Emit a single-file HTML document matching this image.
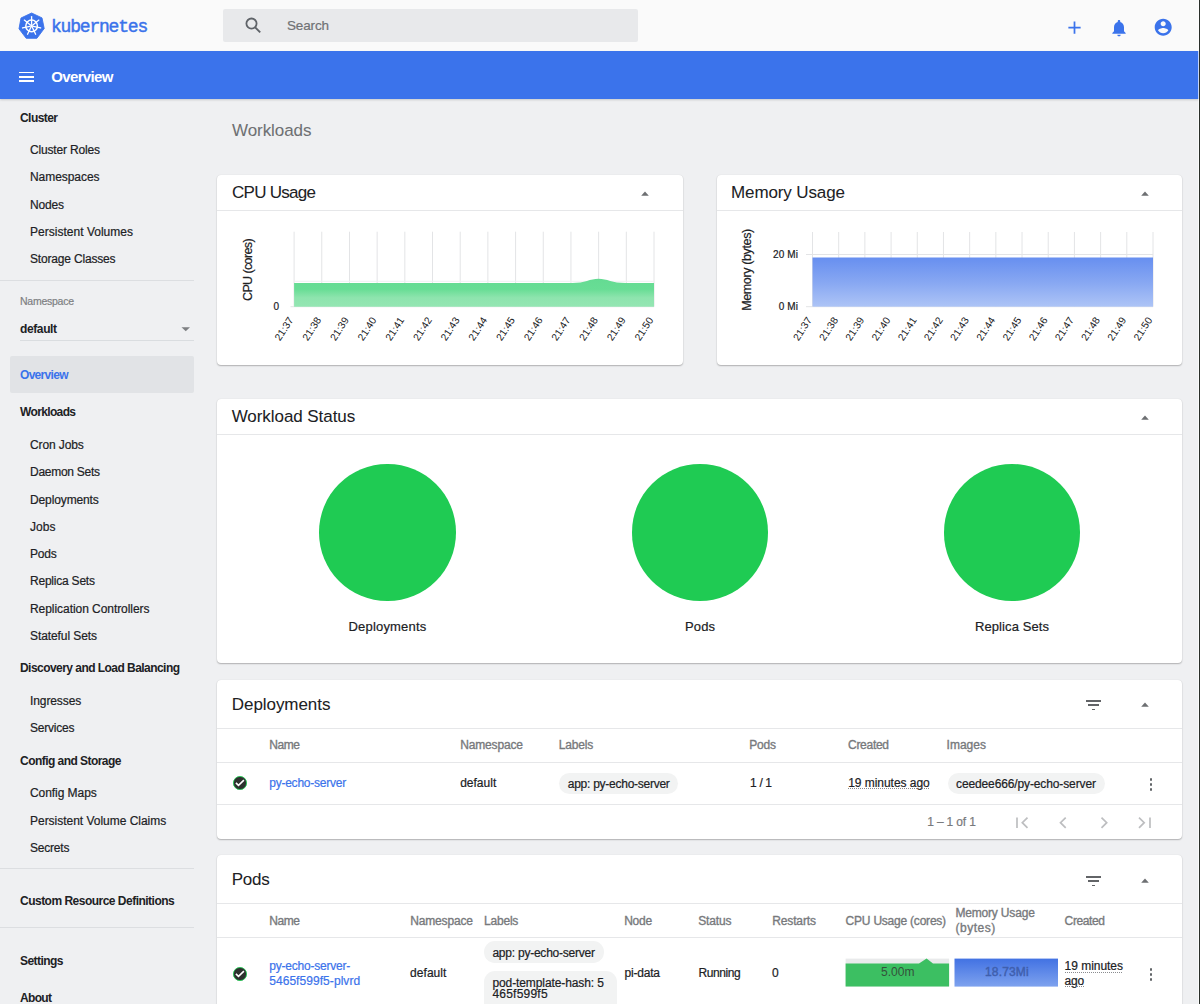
<!DOCTYPE html><html><head><meta charset="utf-8"><style>
html,body{margin:0;padding:0;width:1200px;height:1004px;overflow:hidden;background:#eff0f2;}
body{position:relative;font-family:"Liberation Sans",sans-serif;}
.t{position:absolute;white-space:nowrap;line-height:1;z-index:4;-webkit-text-stroke:0.2px currentColor;}
div,svg{position:absolute;}
svg{z-index:4;}
</style></head><body>
<div style="position:absolute;left:0px;top:0px;width:1200px;height:51px;background:#fafafa;"></div>
<svg style="position:absolute;left:0;top:0" width="60" height="51" viewBox="0 0 60 51">
<path d="M31.6 13 L42 17.9 L44.2 28.5 L36.9 38.3 L26.2 38.3 L19 28.8 L21 18 Z" fill="#3b73eb" stroke="#3b73eb" stroke-width="0.9" stroke-linejoin="round"/>
<g stroke="#fff" stroke-width="1.5" fill="none" stroke-linecap="round">
<circle cx="31.6" cy="25.9" r="5.8"/>
</g>
<g stroke="#fff" stroke-width="1.3" stroke-linecap="round">
<line x1="31.60" y1="24.30" x2="31.60" y2="16.60"/><line x1="32.85" y1="24.90" x2="38.87" y2="20.10"/><line x1="33.16" y1="26.26" x2="40.67" y2="27.97"/><line x1="32.29" y1="27.34" x2="35.64" y2="34.28"/><line x1="30.91" y1="27.34" x2="27.56" y2="34.28"/><line x1="30.04" y1="26.26" x2="22.53" y2="27.97"/><line x1="30.35" y1="24.90" x2="24.33" y2="20.10"/>
</g>
<circle cx="31.6" cy="25.9" r="1.4" fill="#fff"/>
</svg>
<div class="t" style="left:51px;top:17.6px;font-family:'Liberation Mono';font-weight:normal;-webkit-text-stroke:0.45px #3b73eb;font-size:18px;letter-spacing:-1.2px;color:#3b73eb">kubernetes</div>
<div style="position:absolute;left:223px;top:9px;width:415px;height:33px;background:#e8e9eb;border-radius:2px;"></div>
<svg style="position:absolute;left:240px;top:12px" width="26" height="26" viewBox="0 0 26 26">
<circle cx="11.5" cy="11.6" r="5.1" stroke="#5f6368" stroke-width="1.8" fill="none"/>
<line x1="15.2" y1="15.3" x2="20.2" y2="20.3" stroke="#5f6368" stroke-width="1.9"/>
</svg>
<div class="t" style="left:287.00px;top:19.07px;font-size:13.5px;color:#707275;letter-spacing:-0.160px;">Search</div>
<svg style="position:absolute;left:1064.3px;top:16.7px" width="21" height="21" viewBox="0 0 24 24"><path fill="#3b73eb" d="M19 13h-6v6h-2v-6H5v-2h6V5h2v6h6v2z"/></svg>
<svg style="position:absolute;left:1108.8px;top:17.5px" width="20" height="20" viewBox="0 0 24 24"><path fill="#3b73eb" d="M12 22c1.1 0 2-.9 2-2h-4c0 1.1.89 2 2 2zm6-6v-5c0-3.07-1.64-5.64-4.5-6.32V4c0-.83-.67-1.5-1.5-1.5s-1.5.67-1.5 1.5v.68C7.63 5.36 6 7.92 6 11v5l-2 2v1h16v-1l-2-2z"/></svg>
<svg style="position:absolute;left:1153.3px;top:17.0px" width="20.4" height="20.4" viewBox="0 0 24 24"><path fill="#3b73eb" d="M12 2C6.48 2 2 6.48 2 12s4.48 10 10 10 10-4.48 10-10S17.52 2 12 2zm0 3c1.66 0 3 1.34 3 3s-1.34 3-3 3-3-1.34-3-3 1.34-3 3-3zm0 14.2c-2.5 0-4.71-1.28-6-3.22.03-1.99 4-3.08 6-3.08 1.99 0 5.97 1.09 6 3.08-1.29 1.94-3.5 3.22-6 3.22z"/></svg>
<div style="position:absolute;left:0px;top:51px;width:1200px;height:48.1px;background:#3b73eb;box-shadow:0 1px 2px rgba(0,0,0,.16);z-index:2;"></div>
<div style="position:absolute;left:18.7px;top:71.6px;width:15.6px;height:1.8px;background:#fff;z-index:3;"></div>
<div style="position:absolute;left:18.7px;top:75.9px;width:15.6px;height:1.8px;background:#fff;z-index:3;"></div>
<div style="position:absolute;left:18.7px;top:80.1px;width:15.6px;height:1.8px;background:#fff;z-index:3;"></div>
<div class="t" style="left:51.30px;top:68.50px;font-size:15px;color:#fff;font-weight:bold;-webkit-text-stroke:0;letter-spacing:-0.671px;z-index:3;">Overview</div>
<div style="position:absolute;left:0px;top:99px;width:1200px;height:905px;background:#eff0f2;z-index:0;"></div>
<div class="t" style="left:20.00px;top:111.94px;font-size:12px;color:#202124;font-weight:bold;-webkit-text-stroke:0;letter-spacing:-0.550px;">Cluster</div>
<div class="t" style="left:30.00px;top:144.04px;font-size:12px;color:#202124;letter-spacing:-0.167px;">Cluster Roles</div>
<div class="t" style="left:30.00px;top:171.24px;font-size:12px;color:#202124;letter-spacing:-0.056px;">Namespaces</div>
<div class="t" style="left:30.00px;top:198.54px;font-size:12px;color:#202124;letter-spacing:-0.175px;">Nodes</div>
<div class="t" style="left:30.00px;top:225.74px;font-size:12px;color:#202124;letter-spacing:0.018px;">Persistent Volumes</div>
<div class="t" style="left:30.00px;top:253.14px;font-size:12px;color:#202124;letter-spacing:-0.179px;">Storage Classes</div>
<div style="position:absolute;left:0px;top:280px;width:194px;height:1px;background:#dcdee1;"></div>
<div class="t" style="left:20.00px;top:296.11px;font-size:10.5px;color:#7d7f82;letter-spacing:-0.250px;">Namespace</div>
<div class="t" style="left:20.00px;top:323.14px;font-size:12px;color:#202124;font-weight:bold;-webkit-text-stroke:0;letter-spacing:-0.383px;">default</div>
<svg style="position:absolute;left:180px;top:325px" width="12" height="8"><path d="M1.5 2.2 L10 2.2 L5.75 6.2Z" fill="#7d7f82"/></svg>
<div style="position:absolute;left:20px;top:340.2px;width:174px;height:1px;background:#dadde0;"></div>
<div style="position:absolute;left:9.7px;top:356.3px;width:184.3px;height:37px;background:#e1e3e6;border-radius:2px;"></div>
<div class="t" style="left:20.00px;top:368.54px;font-size:12px;color:#3b73eb;font-weight:bold;-webkit-text-stroke:0;letter-spacing:-0.700px;">Overview</div>
<div class="t" style="left:20.00px;top:406.04px;font-size:12px;color:#202124;font-weight:bold;-webkit-text-stroke:0;letter-spacing:-0.638px;">Workloads</div>
<div class="t" style="left:30.00px;top:439.04px;font-size:12px;color:#202124;letter-spacing:-0.113px;">Cron Jobs</div>
<div class="t" style="left:30.00px;top:466.34px;font-size:12px;color:#202124;letter-spacing:-0.270px;">Daemon Sets</div>
<div class="t" style="left:30.00px;top:493.64px;font-size:12px;color:#202124;letter-spacing:-0.120px;">Deployments</div>
<div class="t" style="left:30.00px;top:520.94px;font-size:12px;color:#202124;letter-spacing:0.067px;">Jobs</div>
<div class="t" style="left:30.00px;top:548.24px;font-size:12px;color:#202124;letter-spacing:-0.200px;">Pods</div>
<div class="t" style="left:30.00px;top:575.24px;font-size:12px;color:#202124;letter-spacing:-0.218px;">Replica Sets</div>
<div class="t" style="left:30.00px;top:602.54px;font-size:12px;color:#202124;letter-spacing:-0.055px;">Replication Controllers</div>
<div class="t" style="left:30.00px;top:629.74px;font-size:12px;color:#202124;letter-spacing:-0.083px;">Stateful Sets</div>
<div class="t" style="left:20.00px;top:662.34px;font-size:12px;color:#202124;font-weight:bold;-webkit-text-stroke:0;letter-spacing:-0.544px;">Discovery and Load Balancing</div>
<div class="t" style="left:30.00px;top:694.94px;font-size:12px;color:#202124;letter-spacing:-0.100px;">Ingresses</div>
<div class="t" style="left:30.00px;top:722.14px;font-size:12px;color:#202124;letter-spacing:-0.214px;">Services</div>
<div class="t" style="left:20.00px;top:754.94px;font-size:12px;color:#202124;font-weight:bold;-webkit-text-stroke:0;letter-spacing:-0.541px;">Config and Storage</div>
<div class="t" style="left:30.00px;top:787.24px;font-size:12px;color:#202124;letter-spacing:-0.060px;">Config Maps</div>
<div class="t" style="left:30.00px;top:814.64px;font-size:12px;color:#202124;letter-spacing:-0.022px;">Persistent Volume Claims</div>
<div class="t" style="left:30.00px;top:841.84px;font-size:12px;color:#202124;letter-spacing:-0.200px;">Secrets</div>
<div style="position:absolute;left:0px;top:867.5px;width:194px;height:1px;background:#dcdee1;"></div>
<div class="t" style="left:20.00px;top:894.84px;font-size:12px;color:#202124;font-weight:bold;-webkit-text-stroke:0;letter-spacing:-0.512px;">Custom Resource Definitions</div>
<div style="position:absolute;left:0px;top:927px;width:194px;height:1px;background:#dcdee1;"></div>
<div class="t" style="left:20.00px;top:954.54px;font-size:12px;color:#202124;font-weight:bold;-webkit-text-stroke:0;letter-spacing:-0.543px;">Settings</div>
<div class="t" style="left:20.00px;top:991.84px;font-size:12px;color:#202124;font-weight:bold;-webkit-text-stroke:0;letter-spacing:-0.675px;">About</div>
<div class="t" style="left:232.00px;top:121.61px;font-size:17px;color:#6e7073;letter-spacing:-0.062px;-webkit-text-stroke:0.05px currentColor;">Workloads</div>
<div style="position:absolute;left:217px;top:175px;width:466px;height:190px;background:#fff;border-radius:4px;box-shadow:0 1px 1.5px rgba(0,0,0,.26),0 0 1px rgba(0,0,0,.12);"></div>
<div class="t" style="left:232.00px;top:183.51px;font-size:17px;color:#202124;letter-spacing:-0.725px;-webkit-text-stroke:0.05px currentColor;">CPU Usage</div>
<div style="position:absolute;left:217px;top:209.5px;width:466px;height:1px;background:#e6e7e9;"></div>
<svg style="position:absolute;left:640.2px;top:190.3px" width="10" height="7"><path d="M1.2 5.7 L8.8 5.7 L5 1.6Z" fill="#6d6f72"/></svg>
<div style="position:absolute;left:717px;top:175px;width:465px;height:190px;background:#fff;border-radius:4px;box-shadow:0 1px 1.5px rgba(0,0,0,.26),0 0 1px rgba(0,0,0,.12);"></div>
<div class="t" style="left:731.00px;top:183.51px;font-size:17px;color:#202124;letter-spacing:-0.118px;-webkit-text-stroke:0.05px currentColor;">Memory Usage</div>
<div style="position:absolute;left:717px;top:209.5px;width:465px;height:1px;background:#e6e7e9;"></div>
<svg style="position:absolute;left:1139.5px;top:190.3px" width="10" height="7"><path d="M1.2 5.7 L8.8 5.7 L5 1.6Z" fill="#6d6f72"/></svg>
<div style="position:absolute;left:217px;top:399px;width:965px;height:264px;background:#fff;border-radius:4px;box-shadow:0 1px 1.5px rgba(0,0,0,.26),0 0 1px rgba(0,0,0,.12);"></div>
<div class="t" style="left:231.70px;top:408.11px;font-size:17px;color:#202124;letter-spacing:-0.064px;-webkit-text-stroke:0.05px currentColor;">Workload Status</div>
<div style="position:absolute;left:217px;top:433.5px;width:965px;height:1px;background:#e6e7e9;"></div>
<svg style="position:absolute;left:1139.5px;top:414.0px" width="10" height="7"><path d="M1.2 5.7 L8.8 5.7 L5 1.6Z" fill="#6d6f72"/></svg>
<div style="position:absolute;left:319.2px;top:464.3px;width:136.4px;height:136.6px;background:#1fcb53;border-radius:50%;"></div>
<div class="t" style="left:348.55px;top:620.10px;font-size:13px;color:#202124;letter-spacing:0.180px;">Deployments</div>
<div style="position:absolute;left:631.8px;top:464.3px;width:136.4px;height:136.6px;background:#1fcb53;border-radius:50%;"></div>
<div class="t" style="left:685.00px;top:620.10px;font-size:13px;color:#202124;letter-spacing:0.133px;">Pods</div>
<div style="position:absolute;left:943.8px;top:464.3px;width:136.4px;height:136.6px;background:#1fcb53;border-radius:50%;"></div>
<div class="t" style="left:975.00px;top:620.10px;font-size:13px;color:#202124;letter-spacing:0.091px;">Replica Sets</div>
<div style="position:absolute;left:217px;top:680px;width:965px;height:159px;background:#fff;border-radius:4px;box-shadow:0 1px 1.5px rgba(0,0,0,.26),0 0 1px rgba(0,0,0,.12);"></div>
<div class="t" style="left:231.80px;top:695.61px;font-size:17px;color:#202124;letter-spacing:-0.060px;-webkit-text-stroke:0.05px currentColor;">Deployments</div>
<div style="position:absolute;left:217px;top:727.5px;width:965px;height:1px;background:#e6e7e9;"></div>
<svg style="position:absolute;left:1139.5px;top:701.0px" width="10" height="7"><path d="M1.2 5.7 L8.8 5.7 L5 1.6Z" fill="#6d6f72"/></svg>
<div style="position:absolute;left:217px;top:855px;width:965px;height:200px;background:#fff;border-radius:4px;box-shadow:0 1px 1.5px rgba(0,0,0,.26),0 0 1px rgba(0,0,0,.12);"></div>
<div class="t" style="left:231.80px;top:870.51px;font-size:17px;color:#202124;letter-spacing:-0.300px;-webkit-text-stroke:0.05px currentColor;">Pods</div>
<div style="position:absolute;left:217px;top:903px;width:965px;height:1px;background:#e6e7e9;"></div>
<svg style="position:absolute;left:1139.5px;top:876.5px" width="10" height="7"><path d="M1.2 5.7 L8.8 5.7 L5 1.6Z" fill="#6d6f72"/></svg>
<div class="t" style="left:248.2px;top:269.8px;font-size:12.5px;color:#202124;letter-spacing:-0.610px;transform:translate(-50%,-50%) rotate(-90deg);transform-origin:center;">CPU (cores)</div>
<div class="t" style="left:273.60px;top:302.04px;font-size:10px;color:#202124;">0</div>
<svg style="position:absolute;left:0;top:0;z-index:4" width="1200" height="360" viewBox="0 0 1200 360"><line x1="294.10" y1="231.7" x2="294.10" y2="306.7" stroke="#e3e4e6" stroke-width="1"/><line x1="321.78" y1="231.7" x2="321.78" y2="306.7" stroke="#e3e4e6" stroke-width="1"/><line x1="349.47" y1="231.7" x2="349.47" y2="306.7" stroke="#e3e4e6" stroke-width="1"/><line x1="377.15" y1="231.7" x2="377.15" y2="306.7" stroke="#e3e4e6" stroke-width="1"/><line x1="404.84" y1="231.7" x2="404.84" y2="306.7" stroke="#e3e4e6" stroke-width="1"/><line x1="432.52" y1="231.7" x2="432.52" y2="306.7" stroke="#e3e4e6" stroke-width="1"/><line x1="460.21" y1="231.7" x2="460.21" y2="306.7" stroke="#e3e4e6" stroke-width="1"/><line x1="487.89" y1="231.7" x2="487.89" y2="306.7" stroke="#e3e4e6" stroke-width="1"/><line x1="515.58" y1="231.7" x2="515.58" y2="306.7" stroke="#e3e4e6" stroke-width="1"/><line x1="543.26" y1="231.7" x2="543.26" y2="306.7" stroke="#e3e4e6" stroke-width="1"/><line x1="570.95" y1="231.7" x2="570.95" y2="306.7" stroke="#e3e4e6" stroke-width="1"/><line x1="598.63" y1="231.7" x2="598.63" y2="306.7" stroke="#e3e4e6" stroke-width="1"/><line x1="626.32" y1="231.7" x2="626.32" y2="306.7" stroke="#e3e4e6" stroke-width="1"/><line x1="654.00" y1="231.7" x2="654.00" y2="306.7" stroke="#e3e4e6" stroke-width="1"/><line x1="294" y1="281.3" x2="654" y2="281.3" stroke="#f1f1f2" stroke-width="1"/><line x1="290.5" y1="306.7" x2="654" y2="306.7" stroke="#e3e4e6" stroke-width="1"/><defs><linearGradient id="gcpu" x1="0" y1="0" x2="0" y2="1"><stop offset="0" stop-color="#64db92"/><stop offset="0.38" stop-color="#68dd95"/><stop offset="0.68" stop-color="#8ee4ae"/><stop offset="1" stop-color="#94e6b3"/></linearGradient><linearGradient id="gmem" x1="0" y1="0" x2="0" y2="1"><stop offset="0" stop-color="#678ff0"/><stop offset="0.5" stop-color="#87a7f2"/><stop offset="1" stop-color="#adc4f6"/></linearGradient></defs><path d="M294.1 283 L572 283 C585 283 590 278.7 598.5 278.7 C607 278.7 612 283 626 283 L654 283 L654 306.7 L294.1 306.7 Z" fill="url(#gcpu)"/><text x="293.90" y="320" font-size="10.2" fill="#202124" text-anchor="end" transform="rotate(-57 293.90 320)" font-family="Liberation Sans">21:37</text><text x="321.58" y="320" font-size="10.2" fill="#202124" text-anchor="end" transform="rotate(-57 321.58 320)" font-family="Liberation Sans">21:38</text><text x="349.27" y="320" font-size="10.2" fill="#202124" text-anchor="end" transform="rotate(-57 349.27 320)" font-family="Liberation Sans">21:39</text><text x="376.95" y="320" font-size="10.2" fill="#202124" text-anchor="end" transform="rotate(-57 376.95 320)" font-family="Liberation Sans">21:40</text><text x="404.64" y="320" font-size="10.2" fill="#202124" text-anchor="end" transform="rotate(-57 404.64 320)" font-family="Liberation Sans">21:41</text><text x="432.32" y="320" font-size="10.2" fill="#202124" text-anchor="end" transform="rotate(-57 432.32 320)" font-family="Liberation Sans">21:42</text><text x="460.01" y="320" font-size="10.2" fill="#202124" text-anchor="end" transform="rotate(-57 460.01 320)" font-family="Liberation Sans">21:43</text><text x="487.69" y="320" font-size="10.2" fill="#202124" text-anchor="end" transform="rotate(-57 487.69 320)" font-family="Liberation Sans">21:44</text><text x="515.38" y="320" font-size="10.2" fill="#202124" text-anchor="end" transform="rotate(-57 515.38 320)" font-family="Liberation Sans">21:45</text><text x="543.06" y="320" font-size="10.2" fill="#202124" text-anchor="end" transform="rotate(-57 543.06 320)" font-family="Liberation Sans">21:46</text><text x="570.75" y="320" font-size="10.2" fill="#202124" text-anchor="end" transform="rotate(-57 570.75 320)" font-family="Liberation Sans">21:47</text><text x="598.43" y="320" font-size="10.2" fill="#202124" text-anchor="end" transform="rotate(-57 598.43 320)" font-family="Liberation Sans">21:48</text><text x="626.12" y="320" font-size="10.2" fill="#202124" text-anchor="end" transform="rotate(-57 626.12 320)" font-family="Liberation Sans">21:49</text><text x="653.80" y="320" font-size="10.2" fill="#202124" text-anchor="end" transform="rotate(-57 653.80 320)" font-family="Liberation Sans">21:50</text><line x1="812.50" y1="232" x2="812.50" y2="306.7" stroke="#e3e4e6" stroke-width="1"/><line x1="838.69" y1="232" x2="838.69" y2="306.7" stroke="#e3e4e6" stroke-width="1"/><line x1="864.88" y1="232" x2="864.88" y2="306.7" stroke="#e3e4e6" stroke-width="1"/><line x1="891.08" y1="232" x2="891.08" y2="306.7" stroke="#e3e4e6" stroke-width="1"/><line x1="917.27" y1="232" x2="917.27" y2="306.7" stroke="#e3e4e6" stroke-width="1"/><line x1="943.46" y1="232" x2="943.46" y2="306.7" stroke="#e3e4e6" stroke-width="1"/><line x1="969.65" y1="232" x2="969.65" y2="306.7" stroke="#e3e4e6" stroke-width="1"/><line x1="995.85" y1="232" x2="995.85" y2="306.7" stroke="#e3e4e6" stroke-width="1"/><line x1="1022.04" y1="232" x2="1022.04" y2="306.7" stroke="#e3e4e6" stroke-width="1"/><line x1="1048.23" y1="232" x2="1048.23" y2="306.7" stroke="#e3e4e6" stroke-width="1"/><line x1="1074.42" y1="232" x2="1074.42" y2="306.7" stroke="#e3e4e6" stroke-width="1"/><line x1="1100.62" y1="232" x2="1100.62" y2="306.7" stroke="#e3e4e6" stroke-width="1"/><line x1="1126.81" y1="232" x2="1126.81" y2="306.7" stroke="#e3e4e6" stroke-width="1"/><line x1="1153.00" y1="232" x2="1153.00" y2="306.7" stroke="#e3e4e6" stroke-width="1"/><line x1="806" y1="254.5" x2="1153" y2="254.5" stroke="#e3e4e6" stroke-width="1"/><line x1="806" y1="306.7" x2="1153" y2="306.7" stroke="#e3e4e6" stroke-width="1"/><rect x="812.5" y="257.5" width="340.5" height="49.2" fill="url(#gmem)"/><text x="812.30" y="320" font-size="10.2" fill="#202124" text-anchor="end" transform="rotate(-57 812.30 320)" font-family="Liberation Sans">21:37</text><text x="838.49" y="320" font-size="10.2" fill="#202124" text-anchor="end" transform="rotate(-57 838.49 320)" font-family="Liberation Sans">21:38</text><text x="864.68" y="320" font-size="10.2" fill="#202124" text-anchor="end" transform="rotate(-57 864.68 320)" font-family="Liberation Sans">21:39</text><text x="890.88" y="320" font-size="10.2" fill="#202124" text-anchor="end" transform="rotate(-57 890.88 320)" font-family="Liberation Sans">21:40</text><text x="917.07" y="320" font-size="10.2" fill="#202124" text-anchor="end" transform="rotate(-57 917.07 320)" font-family="Liberation Sans">21:41</text><text x="943.26" y="320" font-size="10.2" fill="#202124" text-anchor="end" transform="rotate(-57 943.26 320)" font-family="Liberation Sans">21:42</text><text x="969.45" y="320" font-size="10.2" fill="#202124" text-anchor="end" transform="rotate(-57 969.45 320)" font-family="Liberation Sans">21:43</text><text x="995.65" y="320" font-size="10.2" fill="#202124" text-anchor="end" transform="rotate(-57 995.65 320)" font-family="Liberation Sans">21:44</text><text x="1021.84" y="320" font-size="10.2" fill="#202124" text-anchor="end" transform="rotate(-57 1021.84 320)" font-family="Liberation Sans">21:45</text><text x="1048.03" y="320" font-size="10.2" fill="#202124" text-anchor="end" transform="rotate(-57 1048.03 320)" font-family="Liberation Sans">21:46</text><text x="1074.22" y="320" font-size="10.2" fill="#202124" text-anchor="end" transform="rotate(-57 1074.22 320)" font-family="Liberation Sans">21:47</text><text x="1100.42" y="320" font-size="10.2" fill="#202124" text-anchor="end" transform="rotate(-57 1100.42 320)" font-family="Liberation Sans">21:48</text><text x="1126.61" y="320" font-size="10.2" fill="#202124" text-anchor="end" transform="rotate(-57 1126.61 320)" font-family="Liberation Sans">21:49</text><text x="1152.80" y="320" font-size="10.2" fill="#202124" text-anchor="end" transform="rotate(-57 1152.80 320)" font-family="Liberation Sans">21:50</text></svg>
<div class="t" style="left:747.2px;top:269.8px;font-size:12.5px;color:#202124;letter-spacing:-0.369px;transform:translate(-50%,-50%) rotate(-90deg);transform-origin:center;">Memory (bytes)</div>
<div class="t" style="left:773.00px;top:250.14px;font-size:10px;color:#202124;letter-spacing:0.125px;">20 Mi</div>
<div class="t" style="left:778.80px;top:301.84px;font-size:10px;color:#202124;letter-spacing:0.100px;">0 Mi</div>
<div style="position:absolute;left:1085.8px;top:700.0px;width:15.2px;height:1.6px;background:#626467;z-index:4;"></div>
<div style="position:absolute;left:1088.3px;top:704.3px;width:10.4px;height:1.6px;background:#626467;z-index:4;"></div>
<div style="position:absolute;left:1091.8px;top:708.5px;width:3.2px;height:1.6px;background:#626467;z-index:4;"></div>
<div class="t" style="left:269.20px;top:738.74px;font-size:12px;color:#77797c;letter-spacing:-0.400px;-webkit-text-stroke:0.35px #77797c;">Name</div>
<div class="t" style="left:460.20px;top:738.74px;font-size:12px;color:#77797c;letter-spacing:-0.150px;-webkit-text-stroke:0.35px #77797c;">Namespace</div>
<div class="t" style="left:558.70px;top:738.74px;font-size:12px;color:#77797c;letter-spacing:-0.180px;-webkit-text-stroke:0.35px #77797c;">Labels</div>
<div class="t" style="left:749.20px;top:738.74px;font-size:12px;color:#77797c;letter-spacing:-0.200px;-webkit-text-stroke:0.35px #77797c;">Pods</div>
<div class="t" style="left:848.00px;top:738.74px;font-size:12px;color:#77797c;letter-spacing:-0.283px;-webkit-text-stroke:0.35px #77797c;">Created</div>
<div class="t" style="left:946.60px;top:738.74px;font-size:12px;color:#77797c;-webkit-text-stroke:0.35px #77797c;">Images</div>
<div style="position:absolute;left:217px;top:762px;width:965px;height:1px;background:#e6e7e9;"></div>
<svg style="position:absolute;left:230.9px;top:774.05px" width="18" height="18" viewBox="0 0 18 18"><circle cx="9" cy="9" r="6.6" fill="#2d312e" stroke="#27c756" stroke-width="0.9"/><path d="M4.9 8.8 L7.5 11.3 L12.9 6.2" stroke="#fff" stroke-width="1.6" fill="none"/></svg>
<div class="t" style="left:269.20px;top:776.84px;font-size:12px;color:#3b73eb;letter-spacing:-0.231px;">py-echo-server</div>
<div class="t" style="left:460.20px;top:776.64px;font-size:12px;color:#202124;">default</div>
<div style="position:absolute;left:558.7px;top:772.7px;width:119.7px;height:21.2px;background:#f2f3f3;border-radius:10.6px;z-index:3;"></div>
<div class="t" style="left:567.80px;top:777.84px;font-size:12px;color:#202124;letter-spacing:-0.261px;">app: py-echo-server</div>
<div class="t" style="left:750.10px;top:776.84px;font-size:12px;color:#202124;letter-spacing:-0.350px;">1 / 1</div>
<div class="t" style="left:848.20px;top:776.84px;font-size:12px;color:#202124;letter-spacing:-0.038px;">19 minutes ago</div>
<div style="position:absolute;left:848.2px;top:788px;width:81.6px;height:1px;background-image:linear-gradient(90deg,#8a8c8f 50%,transparent 50%);background-size:2px 1px;z-index:4;"></div>
<div style="position:absolute;left:947.7px;top:772.7px;width:157.2px;height:21.2px;background:#f2f3f3;border-radius:10.6px;z-index:3;"></div>
<div class="t" style="left:956.00px;top:777.84px;font-size:12px;color:#202124;letter-spacing:-0.122px;">ceedee666/py-echo-server</div>
<div style="position:absolute;left:1149.55px;top:777.9499999999999px;width:2.9px;height:2.9px;background:#616467;border-radius:50%;z-index:4;"></div>
<div style="position:absolute;left:1149.55px;top:782.9499999999999px;width:2.9px;height:2.9px;background:#616467;border-radius:50%;z-index:4;"></div>
<div style="position:absolute;left:1149.55px;top:787.9499999999999px;width:2.9px;height:2.9px;background:#616467;border-radius:50%;z-index:4;"></div>
<div style="position:absolute;left:217px;top:803.5px;width:965px;height:1px;background:#e6e7e9;"></div>
<div class="t" style="left:927.20px;top:815.54px;font-size:12px;color:#77797c;letter-spacing:-0.156px;">1 – 1 of 1</div>
<svg style="position:absolute;left:1000px;top:810px" width="170" height="25" viewBox="0 0 170 25"><g stroke="#bdbec0" stroke-width="1.7" fill="none"><line x1="17" y1="7.4" x2="17" y2="18"/><path d="M27.5 7.6 L22.3 12.7 L27.5 17.8"/><path d="M65.7 7.6 L60.5 12.7 L65.7 17.8"/><path d="M101.5 7.6 L106.7 12.7 L101.5 17.8"/><path d="M139 7.6 L144.2 12.7 L139 17.8"/><line x1="150" y1="7.4" x2="150" y2="18"/></g></svg>
<div style="position:absolute;left:1085.8px;top:876.0px;width:15.2px;height:1.6px;background:#626467;z-index:4;"></div>
<div style="position:absolute;left:1088.3px;top:880.3px;width:10.4px;height:1.6px;background:#626467;z-index:4;"></div>
<div style="position:absolute;left:1091.8px;top:884.5px;width:3.2px;height:1.6px;background:#626467;z-index:4;"></div>
<div class="t" style="left:269.20px;top:914.84px;font-size:12px;color:#77797c;letter-spacing:-0.400px;-webkit-text-stroke:0.35px #77797c;">Name</div>
<div class="t" style="left:410.20px;top:914.84px;font-size:12px;color:#77797c;letter-spacing:-0.150px;-webkit-text-stroke:0.35px #77797c;">Namespace</div>
<div class="t" style="left:484.00px;top:914.84px;font-size:12px;color:#77797c;letter-spacing:-0.200px;-webkit-text-stroke:0.35px #77797c;">Labels</div>
<div class="t" style="left:624.20px;top:914.84px;font-size:12px;color:#77797c;letter-spacing:-0.233px;-webkit-text-stroke:0.35px #77797c;">Node</div>
<div class="t" style="left:698.20px;top:914.84px;font-size:12px;color:#77797c;letter-spacing:-0.140px;-webkit-text-stroke:0.35px #77797c;">Status</div>
<div class="t" style="left:772.20px;top:914.84px;font-size:12px;color:#77797c;letter-spacing:-0.129px;-webkit-text-stroke:0.35px #77797c;">Restarts</div>
<div class="t" style="left:845.60px;top:914.84px;font-size:12px;color:#77797c;letter-spacing:-0.219px;-webkit-text-stroke:0.35px #77797c;">CPU Usage (cores)</div>
<div class="t" style="left:1064.60px;top:914.84px;font-size:12px;color:#77797c;letter-spacing:-0.383px;-webkit-text-stroke:0.35px #77797c;">Created</div>
<div class="t" style="left:955.40px;top:907.34px;font-size:12px;color:#77797c;letter-spacing:-0.173px;-webkit-text-stroke:0.35px #77797c;">Memory Usage</div>
<div class="t" style="left:955.40px;top:921.74px;font-size:12px;color:#77797c;letter-spacing:0.550px;-webkit-text-stroke:0.35px #77797c;">(bytes)</div>
<div style="position:absolute;left:217px;top:937.3px;width:965px;height:1px;background:#e6e7e9;"></div>
<svg style="position:absolute;left:230.8px;top:965.2px" width="18" height="18" viewBox="0 0 18 18"><circle cx="9" cy="9" r="6.6" fill="#2d312e" stroke="#27c756" stroke-width="0.9"/><path d="M4.9 8.8 L7.5 11.3 L12.9 6.2" stroke="#fff" stroke-width="1.6" fill="none"/></svg>
<div class="t" style="left:269.20px;top:960.24px;font-size:12px;color:#3b73eb;letter-spacing:-0.214px;">py-echo-server-</div>
<div class="t" style="left:269.20px;top:974.84px;font-size:12px;color:#3b73eb;letter-spacing:0.060px;">5465f599f5-plvrd</div>
<div class="t" style="left:410.00px;top:967.04px;font-size:12px;color:#202124;letter-spacing:0.067px;">default</div>
<div style="position:absolute;left:483.6px;top:941.4px;width:120px;height:21.6px;background:#f2f3f3;border-radius:10.8px;z-index:3;"></div>
<div class="t" style="left:492.40px;top:946.84px;font-size:12px;color:#202124;letter-spacing:-0.228px;">app: py-echo-server</div>
<div style="position:absolute;left:483.6px;top:971px;width:133.4px;height:60px;background:#f2f3f3;border-radius:11px;z-index:3;"></div>
<div class="t" style="left:492.40px;top:977.24px;font-size:12px;color:#202124;letter-spacing:-0.095px;">pod-template-hash: 5</div>
<div class="t" style="left:492.40px;top:988.44px;font-size:12px;color:#202124;letter-spacing:0.225px;">465f599f5</div>
<div class="t" style="left:624.60px;top:966.84px;font-size:12px;color:#202124;letter-spacing:-0.217px;">pi-data</div>
<div class="t" style="left:698.60px;top:966.84px;font-size:12px;color:#202124;letter-spacing:-0.450px;">Running</div>
<div class="t" style="left:772.00px;top:966.84px;font-size:12px;color:#202124;">0</div>
<svg style="position:absolute;left:845px;top:957px" width="215" height="31" viewBox="0 0 215 31"><rect x="0.6" y="1.6" width="103.5" height="28" fill="#e9eaeb"/><path d="M0.6 6.4 L74 6.4 L81.6 1.6 L88 6.4 L104.1 6.4 L104.1 29.6 L0.6 29.6Z" fill="#3cbf62"/><defs><linearGradient id="gsp" x1="0" y1="0" x2="0" y2="1"><stop offset="0" stop-color="#4272e3"/><stop offset="1" stop-color="#7ea2ee"/></linearGradient></defs><rect x="109.5" y="1.6" width="103.5" height="28" fill="url(#gsp)"/></svg>
<div class="t" style="left:881.00px;top:966.44px;font-size:12px;color:#34513b;letter-spacing:0.050px;-webkit-text-stroke:0;">5.00m</div>
<div class="t" style="left:985.00px;top:966.44px;font-size:12px;color:#3f5fae;letter-spacing:0.150px;-webkit-text-stroke:0.45px #3f5fae;">18.73Mi</div>
<div class="t" style="left:1064.60px;top:959.84px;font-size:12px;color:#202124;letter-spacing:-0.033px;">19 minutes</div>
<div class="t" style="left:1064.60px;top:974.84px;font-size:12px;color:#202124;letter-spacing:-0.200px;">ago</div>
<div style="position:absolute;left:1064.6px;top:971.5px;width:58.4px;height:1px;background-image:linear-gradient(90deg,#8a8c8f 50%,transparent 50%);background-size:2px 1px;z-index:4;"></div>
<div style="position:absolute;left:1064.6px;top:985.6px;width:19.6px;height:1px;background-image:linear-gradient(90deg,#8a8c8f 50%,transparent 50%);background-size:2px 1px;z-index:4;"></div>
<div style="position:absolute;left:1149.55px;top:968.05px;width:2.9px;height:2.9px;background:#616467;border-radius:50%;z-index:4;"></div>
<div style="position:absolute;left:1149.55px;top:973.05px;width:2.9px;height:2.9px;background:#616467;border-radius:50%;z-index:4;"></div>
<div style="position:absolute;left:1149.55px;top:978.05px;width:2.9px;height:2.9px;background:#616467;border-radius:50%;z-index:4;"></div>
<div style="position:absolute;left:1199px;top:0;width:1px;height:1004px;background:#2a2f2a;z-index:9"></div><div style="position:absolute;left:1198px;top:0;width:1px;height:1004px;background:rgba(255,255,255,.7);z-index:9"></div>
</body></html>
